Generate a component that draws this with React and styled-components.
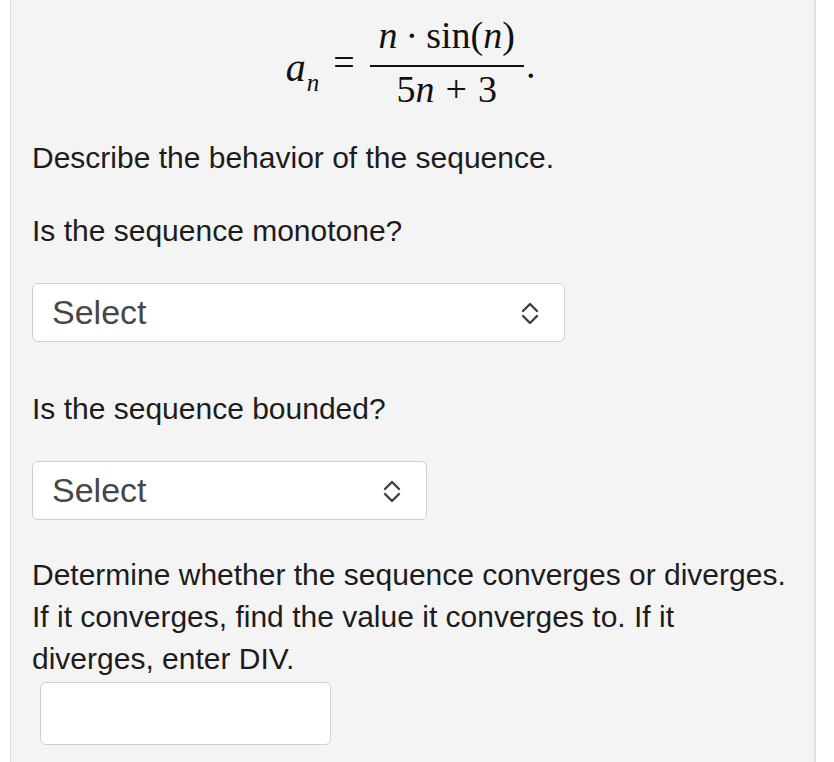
import React from 'react';
import styled, {createGlobalStyle} from 'styled-components';

const GlobalStyle = createGlobalStyle`
  html, body {
    margin: 0;
    padding: 0;
    background: #ffffff;
  }
  body {
    font-family: "Liberation Sans", Arial, Helvetica, sans-serif;
    color: #1c1c1c;
  }
`;

const Page = styled.div`
  padding-left: 10px;
  width: 834px;
  box-sizing: border-box;
`;

const Panel = styled.div`
  width: 806px;
  min-height: 762px;
  box-sizing: border-box;
  background: #f4f4f4;
  border-left: 1px solid #dcdcdc;
  border-right: 2px solid #e0e0e0;
  padding: 16px 21px 0 21px;
  display: flex;
  flex-direction: column;
  align-items: flex-start;
`;

const MathRow = styled.div`
  align-self: stretch;
  display: flex;
  justify-content: center;
  align-items: center;
  font-family: "Liberation Serif", "Times New Roman", serif;
  font-size: 38px;
  line-height: 38px;
  color: #111;
  padding-right: 4px;
`;

const Var = styled.span`
  font-style: italic;
`;

const Lhs = styled.span`
  font-style: italic;
  padding-top: 12px;
  font-size: 40px;
`;

const Sub = styled.sub`
  font-size: 25px;
  font-style: italic;
  vertical-align: -10px;
  line-height: 0;
  margin-left: 1px;
`;

const Eq = styled.span`
  margin: 0 15px 0 14px;
`;

const Op = styled.span`
  margin: 0 ${props => props.$gap}px;
`;

const Frac = styled.span`
  display: inline-flex;
  flex-direction: column;
  align-items: center;
`;

const Num = styled.span`
  padding: 0 9px 11px 9px;
`;

const Bar = styled.span`
  align-self: stretch;
  height: 2px;
  background: #111;
`;

const Den = styled.span`
  padding-top: 3px;
`;

const Dot = styled.span`
  margin-left: 2px;
  position: relative;
  top: 3px;
`;

const Para = styled.p`
  margin: ${props => props.$top}px 0 0 0;
  font-size: 30px;
  line-height: 42px;
  color: #1c1c1c;
`;

const SelectBox = styled.div`
  margin-top: 31px;
  width: ${props => props.$width}px;
  height: 59px;
  box-sizing: border-box;
  background: #ffffff;
  border: 1px solid #cfcfcf;
  border-radius: 6px;
  display: flex;
  align-items: center;
  justify-content: space-between;
  padding: 0 25px 0 19px;
  font-size: 34px;
  color: #474747;
`;

const Chevrons = () => (
  <svg width="18" height="26" viewBox="0 0 18 26" fill="none">
    <polyline points="2,11 9,4 16,11" stroke="#404040" strokeWidth="2.4" strokeLinecap="round" strokeLinejoin="round"/>
    <polyline points="2,16 9,23 16,16" stroke="#404040" strokeWidth="2.4" strokeLinecap="round" strokeLinejoin="round"/>
  </svg>
);

const AnswerInput = styled.div`
  margin: 2px 0 0 8px;
  width: 291px;
  height: 63px;
  box-sizing: border-box;
  background: #ffffff;
  border: 1px solid #cfcfcf;
  border-radius: 6px;
`;

const Select = ({width}) => (
  <SelectBox $width={width}>
    <span>Select</span>
    <Chevrons/>
  </SelectBox>
);

const App = () => {
  return (
    <Page>
      <GlobalStyle/>
      <Panel>
        <MathRow>
          <Lhs>a<Sub>n</Sub></Lhs>
          <Eq>=</Eq>
          <Frac>
            <Num><Var>n</Var><Op $gap={8}>·</Op>sin(<Var>n</Var>)</Num>
            <Bar/>
            <Den>5<Var>n</Var><Op $gap={11}>+</Op>3</Den>
          </Frac>
          <Dot>.</Dot>
        </MathRow>
        <Para $top={29}>Describe the behavior of the sequence.</Para>
        <Para $top={31}>Is the sequence monotone?</Para>
        <Select width={533}/>
        <Para $top={46}>Is the sequence bounded?</Para>
        <Select width={395}/>
        <Para $top={34}>
          Determine whether the sequence converges or diverges.<br/>
          If it converges, find the value it converges to. If it<br/>
          diverges, enter DIV.
        </Para>
        <AnswerInput/>
      </Panel>
    </Page>
  );
};

export default App;
